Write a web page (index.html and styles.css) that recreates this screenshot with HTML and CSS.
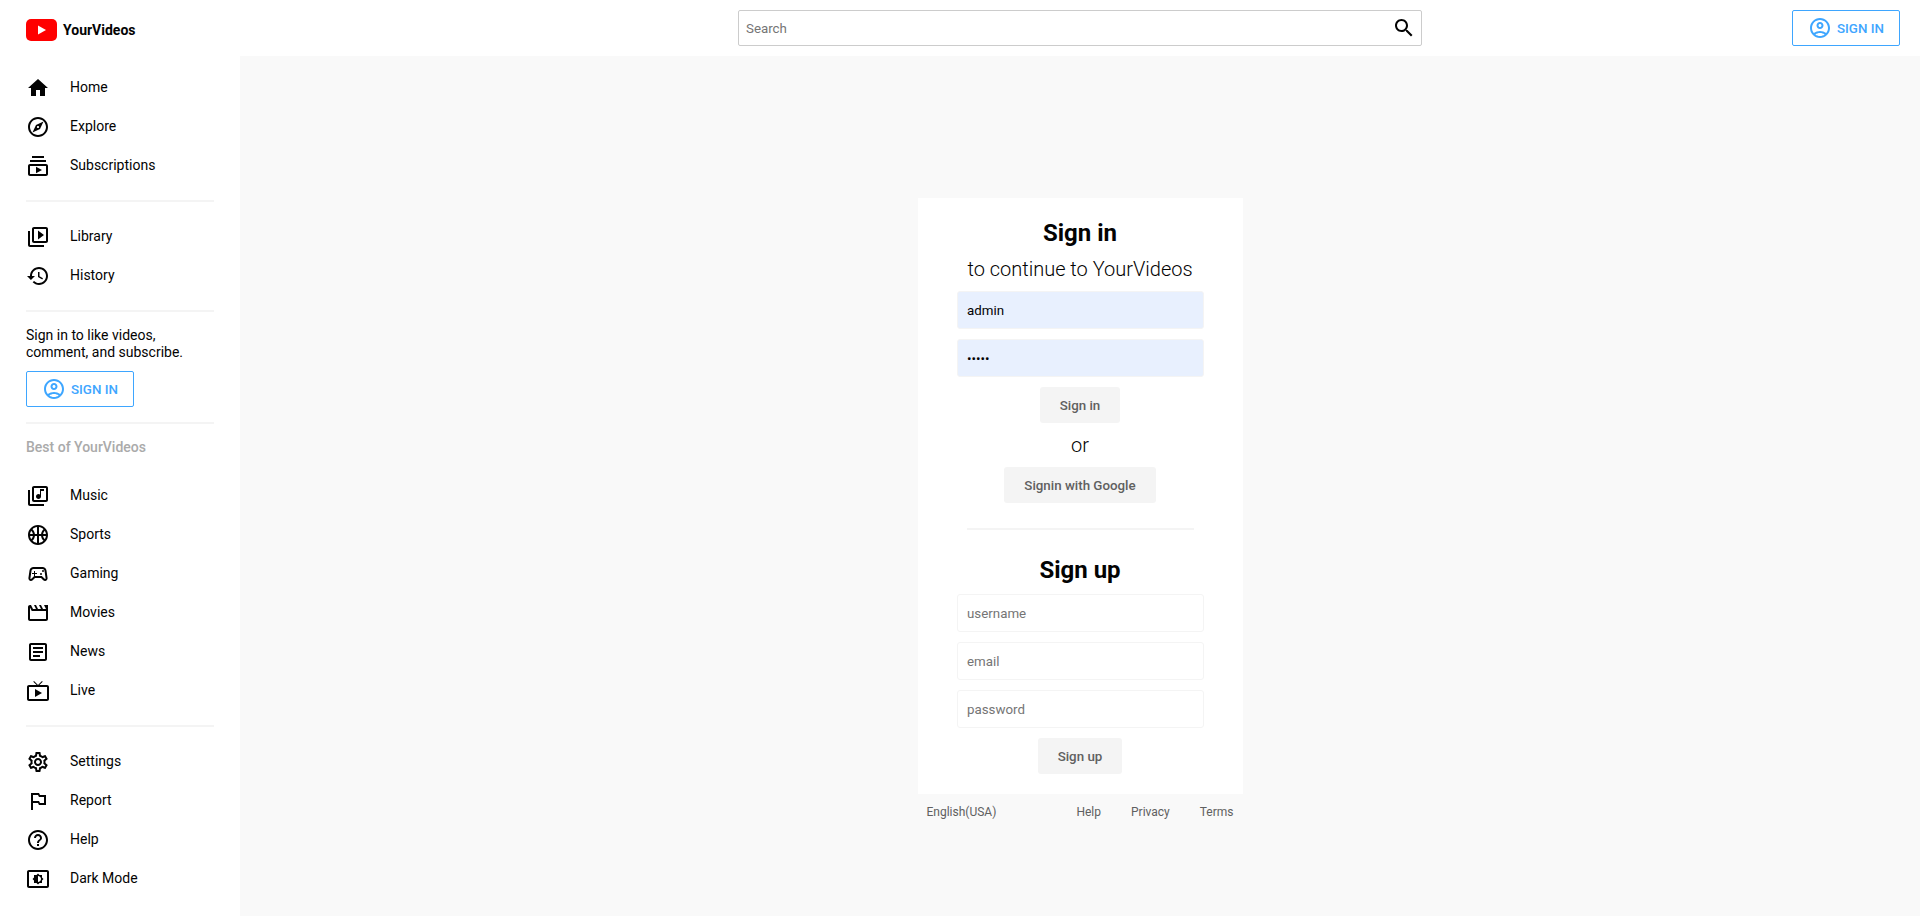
FILE: index.html
```html
<!DOCTYPE html>
<html lang="en">
<head>
<meta charset="utf-8">
<title>YourVideos</title>
<link rel="stylesheet" href="styles.css">
</head>
<body>
<header class="topbar">
  <a class="brand">
    <svg class="brand-logo" viewBox="0 0 31 22"><rect width="31" height="22" rx="5" fill="#f00"/><path d="M12 6.5v9l8-4.5z" fill="#fff"/></svg>
    <span class="brand-name">YourVideos</span>
  </a>
  <div class="search">
    <input class="search-input" type="text" placeholder="Search">
    <svg class="search-icon" viewBox="0 0 24 24"><path d="M15.5 14h-.79l-.28-.27C15.41 12.59 16 11.11 16 9.5 16 5.91 13.09 3 9.5 3S3 5.91 3 9.5 5.91 16 9.5 16c1.61 0 3.09-.59 4.23-1.57l.27.28v.79l5 4.99L20.49 19l-4.99-5zm-6 0C7.01 14 5 11.99 5 9.5S7.01 5 9.5 5 14 7.01 14 9.5 11.99 14 9.5 14z"/></svg>
  </div>
  <a class="signin-btn signin-btn-top">
    <svg class="signin-icon" viewBox="0 0 24 24"><path d="M12 2C6.48 2 2 6.48 2 12s4.48 10 10 10 10-4.48 10-10S17.52 2 12 2zM7.35 18.5C8.66 17.56 10.26 17 12 17s3.34.56 4.65 1.5c-1.31.94-2.91 1.5-4.65 1.5s-3.34-.56-4.65-1.5zm10.79-1.38C16.45 15.8 14.32 15 12 15s-4.45.8-6.14 2.12C4.7 15.73 4 13.95 4 12c0-4.42 3.58-8 8-8s8 3.58 8 8c0 1.95-.7 3.73-1.86 5.12zM12 6c-1.93 0-3.5 1.57-3.5 3.5S10.07 13 12 13s3.5-1.57 3.5-3.5S13.93 6 12 6zm0 5c-.83 0-1.5-.67-1.5-1.5S11.17 8 12 8s1.5.67 1.5 1.5S12.83 11 12 11z"/></svg>
    <span>SIGN IN</span>
  </a>
</header>
<div class="layout">
  <aside class="sidebar">
    <nav class="nav-group">
      <a class="nav-row"><svg class="nav-icon" viewBox="0 0 24 24"><path d="M10 20v-6h4v6h5v-8h3L12 3 2 12h3v8z"/></svg><span>Home</span></a>
      <a class="nav-row"><svg class="nav-icon" viewBox="0 0 24 24"><path d="M12 2C6.48 2 2 6.48 2 12s4.48 10 10 10 10-4.48 10-10S17.52 2 12 2zm0 18c-4.41 0-8-3.59-8-8s3.59-8 8-8 8 3.59 8 8-3.59 8-8 8zm-5.5-2.5l7.51-3.49L17.5 6.5 9.99 9.99 6.5 17.5zm5.5-6.6c.61 0 1.1.49 1.1 1.1s-.49 1.1-1.1 1.1-1.1-.49-1.1-1.1.49-1.1 1.1-1.1z"/></svg><span>Explore</span></a>
      <a class="nav-row"><svg class="nav-icon" viewBox="0 0 24 24"><path d="M4 6h16v2H4zm2-4h12v2H6zm14 8H4c-1.1 0-2 .9-2 2v8c0 1.1.9 2 2 2h16c1.1 0 2-.9 2-2v-8c0-1.1-.9-2-2-2zm0 10H4v-8h16v8zm-10-7.27v6.53L16 16z"/></svg><span>Subscriptions</span></a>
    </nav>
    <hr class="rule">
    <nav class="nav-group">
      <a class="nav-row"><svg class="nav-icon" viewBox="0 0 24 24"><path d="M4 6H2v14c0 1.1.9 2 2 2h14v-2H4V6zm16-4H8c-1.1 0-2 .9-2 2v12c0 1.1.9 2 2 2h12c1.1 0 2-.9 2-2V4c0-1.1-.9-2-2-2zm0 14H8V4h12v12zM12 5.5v9l6-4.5z"/></svg><span>Library</span></a>
      <a class="nav-row"><svg class="nav-icon" viewBox="0 0 24 24"><path d="M13 3c-4.97 0-9 4.03-9 9H1l3.89 3.89.07.14L9 12H6c0-3.87 3.13-7 7-7s7 3.13 7 7-3.13 7-7 7c-1.93 0-3.68-.79-4.94-2.06l-1.42 1.42C8.27 19.99 10.51 21 13 21c4.97 0 9-4.03 9-9s-4.03-9-9-9zm-1 5v5l4.28 2.54.72-1.21-3.5-2.08V8H12z"/></svg><span>History</span></a>
    </nav>
    <hr class="rule">
    <div class="signin-block">
      <p class="signin-text">Sign in to like videos,<br>comment, and subscribe.</p>
      <a class="signin-btn">
        <svg class="signin-icon" viewBox="0 0 24 24"><path d="M12 2C6.48 2 2 6.48 2 12s4.48 10 10 10 10-4.48 10-10S17.52 2 12 2zM7.35 18.5C8.66 17.56 10.26 17 12 17s3.34.56 4.65 1.5c-1.31.94-2.91 1.5-4.65 1.5s-3.34-.56-4.65-1.5zm10.79-1.38C16.45 15.8 14.32 15 12 15s-4.45.8-6.14 2.12C4.7 15.73 4 13.95 4 12c0-4.42 3.58-8 8-8s8 3.58 8 8c0 1.95-.7 3.73-1.86 5.12zM12 6c-1.93 0-3.5 1.57-3.5 3.5S10.07 13 12 13s3.5-1.57 3.5-3.5S13.93 6 12 6zm0 5c-.83 0-1.5-.67-1.5-1.5S11.17 8 12 8s1.5.67 1.5 1.5S12.83 11 12 11z"/></svg>
        <span>SIGN IN</span>
      </a>
    </div>
    <hr class="rule">
    <h2 class="nav-title">Best of YourVideos</h2>
    <nav class="nav-group">
      <a class="nav-row"><svg class="nav-icon" viewBox="0 0 24 24"><path d="M20 2H8c-1.1 0-2 .9-2 2v12c0 1.1.9 2 2 2h12c1.1 0 2-.9 2-2V4c0-1.1-.9-2-2-2zm0 14H8V4h12v12zm-7.5-1c1.38 0 2.5-1.12 2.5-2.5V7h3V5h-4v5.51c-.42-.32-.93-.51-1.5-.51-1.38 0-2.5 1.12-2.5 2.5s1.12 2.5 2.5 2.5zM2 6v14c0 1.1.9 2 2 2h14v-2H4V6H2z"/></svg><span>Music</span></a>
      <a class="nav-row"><svg class="nav-icon" viewBox="0 0 24 24"><path d="M12 2C6.48 2 2 6.48 2 12s4.48 10 10 10 10-4.48 10-10S17.52 2 12 2zM5.23 7.75C6.1 8.62 6.7 9.74 6.91 11H4.07c.15-1.18.56-2.28 1.16-3.25zM4.07 13h2.84c-.21 1.26-.81 2.38-1.68 3.25-.6-.97-1.01-2.07-1.16-3.25zM11 19.93c-1.73-.22-3.29-1-4.49-2.14 1.3-1.24 2.19-2.91 2.42-4.79H11v6.93zM11 11H8.93C8.7 9.12 7.81 7.45 6.51 6.2 7.71 5.07 9.27 4.29 11 4.07V11zm8.93 0h-2.84c.21-1.26.81-2.38 1.68-3.25.6.97 1.01 2.07 1.16 3.25zM13 4.07c1.73.22 3.29.99 4.49 2.13-1.3 1.25-2.19 2.92-2.42 4.8H13V4.07zm0 15.86V13h2.07c.23 1.88 1.12 3.55 2.42 4.79-1.2 1.15-2.76 1.92-4.49 2.14zm5.77-3.68c-.87-.87-1.47-1.99-1.68-3.25h2.84c-.15 1.18-.56 2.28-1.16 3.25z"/></svg><span>Sports</span></a>
      <a class="nav-row"><svg class="nav-icon" viewBox="0 0 24 24"><path d="M21.58 16.09l-1.09-7.66C20.21 6.46 18.52 5 16.53 5H7.47C5.48 5 3.79 6.46 3.51 8.43l-1.09 7.66C2.2 17.63 3.39 19 4.94 19c.68 0 1.32-.27 1.8-.75L9 16h6l2.25 2.25c.48.48 1.13.75 1.8.75 1.56 0 2.75-1.37 2.53-2.91zm-2.53.91c-.14 0-.27-.05-.39-.16L15.83 14H8.17l-2.83 2.84c-.12.11-.25.16-.39.16-.3 0-.55-.25-.55-.57l.01-.06 1.09-7.66C5.64 7.72 6.48 7 7.47 7h9.06c.99 0 1.83.72 1.97 1.71l1.09 7.66.01.06c0 .32-.25.57-.55.57zM11 11H9V9H8v2H6v1h2v2h1v-2h2v-1z"/><circle cx="15" cy="12" r="1"/><circle cx="17" cy="9" r="1"/></svg><span>Gaming</span></a>
      <a class="nav-row"><svg class="nav-icon" viewBox="0 0 24 24"><path d="M4 6.47L5.76 10H20v8H4V6.47M22 4h-4l2 4h-3l-2-4h-2l2 4h-3l-2-4H8l2 4H7L5 4H4c-1.1 0-1.99.9-1.99 2L2 18c0 1.1.9 2 2 2h16c1.1 0 2-.9 2-2V4z"/></svg><span>Movies</span></a>
      <a class="nav-row"><svg class="nav-icon" viewBox="0 0 24 24"><path d="M19 5v14H5V5h14m0-2H5c-1.1 0-2 .9-2 2v14c0 1.1.9 2 2 2h14c1.1 0 2-.9 2-2V5c0-1.1-.9-2-2-2zM14 17H7v-2h7v2zm3-4H7v-2h10v2zm0-4H7V7h10v2z"/></svg><span>News</span></a>
      <a class="nav-row"><svg class="nav-icon" viewBox="0 0 24 24"><path d="M21 6h-7.59l3.29-3.29L16 2l-4 4-4-4-.71.71L10.59 6H3c-1.1 0-2 .89-2 2v12c0 1.1.9 2 2 2h18c1.1 0 2-.9 2-2V8c0-1.11-.9-2-2-2zm0 14H3V8h18v12zM9 10v8l7-4z"/></svg><span>Live</span></a>
    </nav>
    <hr class="rule">
    <nav class="nav-group">
      <a class="nav-row"><svg class="nav-icon" viewBox="0 0 24 24"><path d="M19.43 12.98c.04-.32.07-.64.07-.98 0-.34-.03-.66-.07-.98l2.11-1.65c.19-.15.24-.42.12-.64l-2-3.46c-.09-.16-.26-.25-.44-.25-.06 0-.12.01-.17.03l-2.49 1c-.52-.4-1.08-.73-1.69-.98l-.38-2.65C14.46 2.18 14.25 2 14 2h-4c-.25 0-.46.18-.49.42l-.38 2.65c-.61.25-1.17.59-1.69.98l-2.49-1c-.06-.02-.12-.03-.18-.03-.17 0-.34.09-.43.25l-2 3.46c-.13.22-.07.49.12.64l2.11 1.65c-.04.32-.07.65-.07.98 0 .33.03.66.07.98l-2.11 1.65c-.19.15-.24.42-.12.64l2 3.46c.09.16.26.25.44.25.06 0 .12-.01.17-.03l2.49-1c.52.4 1.08.73 1.69.98l.38 2.65c.03.24.24.42.49.42h4c.25 0 .46-.18.49-.42l.38-2.65c.61-.25 1.17-.59 1.69-.98l2.49 1c.06.02.12.03.18.03.17 0 .34-.09.43-.25l2-3.46c.12-.22.07-.49-.12-.64l-2.11-1.65zm-1.98-1.71c.04.31.05.52.05.73 0 .21-.02.43-.05.73l-.14 1.13.89.7 1.08.84-.7 1.21-1.27-.51-1.04-.42-.9.68c-.43.32-.84.56-1.25.73l-1.06.43-.16 1.13-.2 1.35h-1.4l-.19-1.35-.16-1.13-1.06-.43c-.43-.18-.83-.41-1.23-.71l-.91-.7-1.06.43-1.27.51-.7-1.21 1.08-.84.89-.7-.14-1.13c-.03-.31-.05-.54-.05-.74s.02-.43.05-.73l.14-1.13-.89-.7-1.08-.84.7-1.21 1.27.51 1.04.42.9-.68c.43-.32.84-.56 1.25-.73l1.06-.43.16-1.13.2-1.35h1.39l.19 1.35.16 1.13 1.06.43c.43.18.83.41 1.23.71l.91.7 1.06-.43 1.27-.51.7 1.21-1.07.85-.89.7.14 1.13zM12 8c-2.21 0-4 1.79-4 4s1.79 4 4 4 4-1.79 4-4-1.79-4-4-4zm0 6c-1.1 0-2-.9-2-2s.9-2 2-2 2 .9 2 2-.9 2-2 2z"/></svg><span>Settings</span></a>
      <a class="nav-row"><svg class="nav-icon" viewBox="0 0 24 24"><path d="M14 6l-1-2H5v17h2v-7h5l1 2h7V6h-6zm4 8h-4l-1-2H7V6h5l1 2h5v6z"/></svg><span>Report</span></a>
      <a class="nav-row"><svg class="nav-icon" viewBox="0 0 24 24"><path d="M11 18h2v-2h-2v2zm1-16C6.48 2 2 6.48 2 12s4.48 10 10 10 10-4.48 10-10S17.52 2 12 2zm0 18c-4.41 0-8-3.59-8-8s3.59-8 8-8 8 3.59 8 8-3.59 8-8 8zm0-14c-2.21 0-4 1.79-4 4h2c0-1.1.9-2 2-2s2 .9 2 2c0 2-3 1.75-3 5h2c0-2.25 3-2.5 3-5 0-2.21-1.79-4-4-4z"/></svg><span>Help</span></a>
      <a class="nav-row"><svg class="nav-icon" viewBox="0 0 24 24"><path d="M21 3H3c-1.1 0-2 .9-2 2v14c0 1.1.9 2 2 2h18c1.1 0 2-.9 2-2V5c0-1.1-.9-2-2-2zm0 16.01H3V4.99h18v14.02zM8 16h2.5l1.5 1.5 1.5-1.5H16v-2.5l1.5-1.5-1.5-1.5V8h-2.5L12 6.5 10.5 8H8v2.5L6.5 12 8 13.5V16zm4-7c1.66 0 3 1.34 3 3s-1.34 3-3 3V9z"/></svg><span>Dark Mode</span></a>
    </nav>
  </aside>
  <main class="main">
    <div class="auth">
      <form class="card">
        <h1 class="card-title">Sign in</h1>
        <p class="card-sub">to continue to YourVideos</p>
        <input class="field field-filled" type="text" value="admin">
        <input class="field field-filled" type="password" value="admin">
        <button class="btn" type="button">Sign in</button>
        <p class="card-or">or</p>
        <button class="btn" type="button">Signin with Google</button>
        <hr class="card-rule">
        <h1 class="card-title">Sign up</h1>
        <input class="field" type="text" placeholder="username">
        <input class="field" type="text" placeholder="email">
        <input class="field" type="password" placeholder="password">
        <button class="btn" type="button">Sign up</button>
      </form>
      <footer class="auth-foot">
        <span>English(USA)</span>
        <div class="auth-links"><a>Help</a><a>Privacy</a><a>Terms</a></div>
      </footer>
    </div>
  </main>
</div>
</body>
</html>
```
FILE: styles.css
```css
* { box-sizing: border-box; }
html, body { height: 100%; }
body {
  margin: 0;
  overflow: hidden;
  background: #fff;
  color: #030303;
  font-family: Roboto, "Liberation Sans", sans-serif;
  font-size: 14px;
}
.topbar {
  display: grid;
  grid-template-columns: 738px 684px 1fr;
  align-items: center;
  height: 56px;
  background: #fff;
}
.brand { display: flex; align-items: center; gap: 6px; padding: 3px 0 0 26px; }
.brand-logo { width: 31px; height: 22px; }
.brand-name { font-weight: 700; font-size: 14px; color: #030303; }
.search {
  display: flex;
  align-items: center;
  height: 36px;
  padding: 0 5px 0 7px;
  border: 1px solid #ccc;
  border-radius: 2px;
  background: #fff;
}
.search-input {
  flex: 1;
  min-width: 0;
  border: 0;
  outline: 0;
  padding: 0;
  font: 400 13.333px Roboto, sans-serif;
  color: #030303;
}
.search-input::placeholder { color: #757575; opacity: 1; }
.search-icon { width: 24px; height: 24px; fill: #030303; }
.signin-btn {
  display: flex;
  align-items: center;
  width: 108px;
  height: 36px;
  padding-left: 15px;
  gap: 5px;
  border: 1px solid #3ea6ff;
  border-radius: 2px;
  color: #3ea6ff;
  fill: #3ea6ff;
  font-size: 13.333px;
  font-weight: 500;
}
.signin-btn-top { justify-self: end; margin-right: 20px; }
.signin-icon { width: 24px; height: 24px; flex: none; }
.layout { display: flex; height: 860px; }
.sidebar { flex: none; width: 240px; padding: 12px 26px 0; background: #fff; }
.nav-row {
  display: flex;
  gap: 20px;
  height: 39px;
  line-height: 39px;
  color: #030303;
}
.nav-icon { flex: none; width: 24px; height: 24px; margin-top: 8px; fill: #030303; }
.rule { height: 2px; margin: 15px 0; border: 0; background: #f4f4f4; }
.signin-block { display: flex; flex-direction: column; gap: 10px; }
.signin-text { margin: 0; line-height: 17px; color: #030303; }
.nav-title {
  margin: 0 0 21px;
  font-size: 14px;
  font-weight: 500;
  line-height: 16px;
  color: #aaa;
}
.main { flex: 1; display: flex; justify-content: center; padding-top: 142px; background: #f9f9f9; }
.auth { width: 325px; }
.card {
  display: flex;
  flex-direction: column;
  align-items: center;
  gap: 10px;
  padding: 21px 39px 20px;
  background: #fff;
}
.card-title { margin: 0; font-size: 24px; font-weight: 700; line-height: 28px; color: #030303; }
.card-sub { margin: -2px 0 -2px; font-size: 20px; font-weight: 300; line-height: 28px; white-space: nowrap; }
.card-or { margin: 0; font-size: 20px; font-weight: 300; line-height: 24px; }
.field {
  width: 247px;
  height: 38px;
  padding: 0 9.5px;
  border: 1px solid #f4f4f4;
  border-radius: 3px;
  outline: 0;
  background: #fff;
  font: 400 13.333px Roboto, sans-serif;
  color: #030303;
}
.field::placeholder { color: #757575; opacity: 1; }
.field-filled { border-color: #f4f4f4; background: #e8f0fe; }
.btn {
  height: 36px;
  padding: 0 20px;
  border: 0;
  border-radius: 3px;
  background: #f4f4f4;
  color: #606060;
  font: 500 13.333px Roboto, sans-serif;
}
.card-rule { width: 227px; height: 2px; margin: 15px 0 16px; border: 0; background: #f4f4f4; }
.auth-foot {
  display: flex;
  justify-content: space-between;
  padding: 10px 9px 0;
  font-size: 12px;
  line-height: 16px;
  color: #606060;
}
.auth-links { display: flex; gap: 30px; }
```
